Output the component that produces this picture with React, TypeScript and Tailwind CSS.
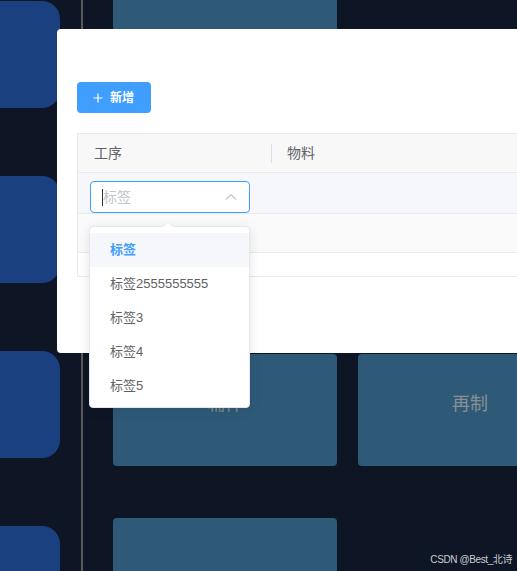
import React from "react";

const font = { fontFamily: '"Liberation Sans", "Noto Sans CJK SC", sans-serif' };

export default function App() {
  const items = ["标签", "标签2555555555", "标签3", "标签4", "标签5"];
  return (
    <div className="relative w-[517px] h-[571px] overflow-hidden bg-[#0e1525]" style={font}>
      {/* background page */}
      <div className="flex h-full">
        <div className="flex flex-col gap-[68px] pt-px w-[60px] shrink-0">
          <div className="h-[107px] w-[60px] shrink-0 rounded-r-[18px] bg-[#1a4080]" />
          <div className="h-[107px] w-[60px] shrink-0 rounded-r-[18px] bg-[#1a4080]" />
          <div className="h-[107px] w-[60px] shrink-0 rounded-r-[18px] bg-[#1a4080]" />
          <div className="h-[107px] w-[60px] shrink-0 rounded-r-[18px] bg-[#1a4080]" />
        </div>
        <div className="ml-[21px] w-[2px] h-full bg-[#5a5a5a] shrink-0" />
        <div className="ml-[30px] flex flex-col gap-[52px] shrink-0">
          <div className="flex gap-[21px] h-[302px] shrink-0">
            <div className="w-[224px] h-full rounded-b-[4px] bg-[#2e5a78]" />
          </div>
          <div className="flex gap-[21px] h-[112px] shrink-0">
            <div className="w-[224px] h-full rounded-[4px] bg-[#2e5a78] flex items-center justify-center pb-3 text-[18px] text-[#8a8f94]">
              辅件
            </div>
            <div className="w-[224px] h-full rounded-[4px] bg-[#2e5a78] flex items-center justify-center pb-3 text-[18px] text-[#8a8f94]">
              再制
            </div>
          </div>
          <div className="flex gap-[21px] h-[112px] shrink-0">
            <div className="w-[224px] h-full rounded-[4px] bg-[#2e5a78]" />
          </div>
        </div>
      </div>

      {/* modal */}
      <div className="absolute left-[57px] top-[29px] w-[600px] h-[324px] bg-white rounded-[4px] pl-5 pt-[53px]">
        <button className="flex items-center gap-[7px] h-[31px] w-[74px] pl-[16px] rounded-[4px] bg-[#409eff] text-white text-[12px] font-bold">
          <svg width="10" height="10" viewBox="0 0 10 10" className="shrink-0">
            <path d="M5 0.5V9.5M0.5 5H9.5" stroke="white" strokeWidth="1.2" />
          </svg>
          <span>新增</span>
        </button>
        <div className="mt-5 border-t border-l border-b border-[#e8eaec]">
          <div className="flex items-center h-[39px] bg-[#f8f8f9] border-b border-[#e8eaec] text-[14px] text-[#606266]">
            <div className="w-[193px] pl-4 shrink-0">工序</div>
            <div className="w-px h-[19px] bg-[#dcdee2]" />
            <div className="pl-[15px]">物料</div>
          </div>
          <div className="h-[41px] bg-[#f5f7fa] border-b border-[#e8eaec] pl-3 pt-[8px]">
            <div className="relative flex items-center w-[160px] h-[32px] rounded-[4px] border border-[#409eff] bg-white pl-[11px]">
              <span className="w-px h-[17px] bg-[#333]" />
              <span className="text-[14px] text-[#c0c4cc]">标签</span>
              <svg width="12" height="8" viewBox="0 0 12 8" className="absolute right-[12px] top-[11px]">
                <path d="M1 6.5L6 1.5L11 6.5" fill="none" stroke="#c0c4cc" strokeWidth="1.1" />
              </svg>
            </div>
          </div>
          <div className="h-[39px] bg-[#fafafa] border-b border-[#e8eaec]" />
          <div className="h-[23px] bg-white" />
        </div>
      </div>

      {/* dropdown */}
      <div className="absolute left-[89px] top-[226px] w-[161px] h-[182px] bg-white border border-[#e4e7ed] rounded-[4px] shadow-[0_2px_12px_0_rgba(0,0,0,0.1)] pt-[6px]">
        <div className="absolute -top-[6px] left-[72px] w-0 h-0 border-x-[6px] border-x-transparent border-b-[6px] border-b-[#e4e7ed]" />
        <div className="absolute -top-[5px] left-[73px] w-0 h-0 border-x-[5px] border-x-transparent border-b-[5px] border-b-white" />
        {items.map((t, i) => (
          <div
            key={t}
            className={
              i === 0
                ? "h-[34px] flex items-center px-5 text-[13px] font-bold text-[#409eff] bg-[#f5f7fa]"
                : "h-[34px] flex items-center px-5 text-[13px] text-[#606266]"
            }
          >
            {t}
          </div>
        ))}
      </div>

      {/* watermark */}
      <div className="absolute right-[5px] bottom-[6px] text-[10px] tracking-[-0.4px] leading-none text-[#c9cdd2]">
        CSDN @Best_北诗
      </div>
    </div>
  );
}
